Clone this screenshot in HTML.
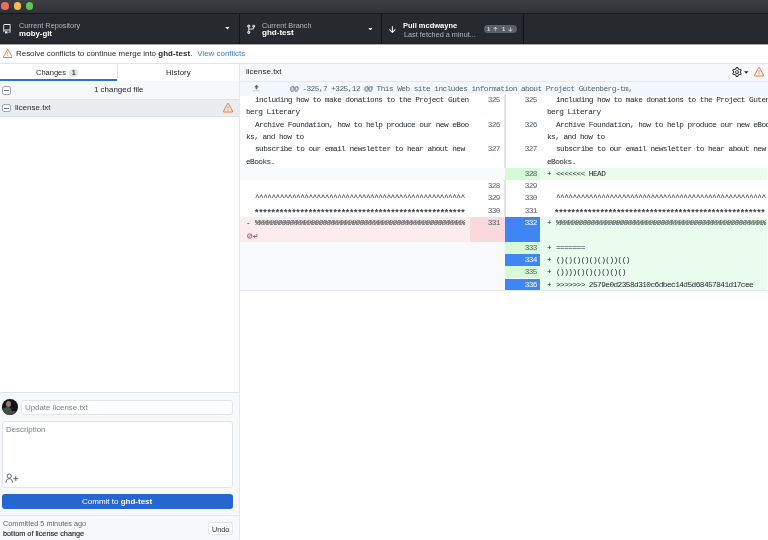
<!DOCTYPE html>
<html><head><meta charset="utf-8">
<style>
*{margin:0;padding:0;box-sizing:border-box}
html,body{width:768px;height:540px;overflow:hidden;background:#fff;font-family:"Liberation Sans",sans-serif;color:#24292e}
.a{position:absolute}
.t{position:absolute;white-space:pre;line-height:1;will-change:transform}
.m{font-family:"Liberation Mono",monospace}
</style></head><body>
<!-- title bar -->
<div class="a" style="left:0;top:0;width:768px;height:13px;background:linear-gradient(#3d3f45,#2e3035)"></div>
<div class="a" style="left:0;top:13px;width:768px;height:1px;background:#19191c"></div>
<div class="a" style="left:1.1px;top:2.2px;width:7.6px;height:7.6px;border-radius:50%;background:#ed6a5e"></div>
<div class="a" style="left:13.5px;top:2.2px;width:7.6px;height:7.6px;border-radius:50%;background:#f5bf4f"></div>
<div class="a" style="left:25.5px;top:2.2px;width:7.6px;height:7.6px;border-radius:50%;background:#61c454"></div>
<!-- toolbar -->
<div class="a" style="left:0;top:14px;width:768px;height:29.5px;background:#26292e"></div>
<div class="a" style="left:0;top:43px;width:768px;height:1px;background:#1d2024"></div><div class="a" style="left:0;top:44px;width:768px;height:1px;background:#a9abae"></div>
<div class="a" style="left:239px;top:14px;width:1px;height:29.5px;background:#121315"></div>
<div class="a" style="left:381px;top:14px;width:1px;height:29.5px;background:#121315"></div>
<div class="a" style="left:523px;top:14px;width:1px;height:29.5px;background:#121315"></div>
<!-- repo icon -->
<svg class="a" style="left:2.45px;top:23.8px" width="9.84" height="9.84" viewBox="0 0 16 16"><path fill="#e6e8ea" d="M2 2.5A2.5 2.5 0 0 1 4.5 0h8.75a.75.75 0 0 1 .75.75v12.5a.75.75 0 0 1-.75.75h-2.5a.75.75 0 0 1 0-1.5h1.75v-2h-8a1 1 0 0 0-.714 1.7.75.75 0 1 1-1.072 1.05A2.495 2.495 0 0 1 2 11.5Zm10.5-1h-8a1 1 0 0 0-1 1v6.708A2.486 2.486 0 0 1 4.5 9h8ZM5 12.25a.25.25 0 0 1 .25-.25h3.5a.25.25 0 0 1 .25.25v3.25a.25.25 0 0 1-.4.2l-1.45-1.087a.249.249 0 0 0-.3 0L5.4 15.7a.25.25 0 0 1-.4-.2Z"/></svg>
<div class="t" style="left:19px;top:21.7px;font-size:7.3px;color:#b3b7bc">Current Repository</div>
<div class="t" style="left:19px;top:29.6px;font-size:7.8px;font-weight:bold;color:#fff">moby-git</div>
<svg class="a" style="left:225.4px;top:27.4px" width="4.8" height="2.6" viewBox="0 0 5 3"><path d="M0 0h5L2.5 3z" fill="#fff"/></svg>
<!-- branch icon -->
<svg class="a" style="left:245.6px;top:23.75px" width="10.4" height="10.4" viewBox="0 0 16 16"><path fill="#e6e8ea" d="M9.5 3.25a2.25 2.25 0 1 1 3 2.122V6A2.5 2.5 0 0 1 10 8.5H6a1 1 0 0 0-1 1v1.128a2.251 2.251 0 1 1-1.5 0V5.372a2.25 2.25 0 1 1 1.5 0v1.836A2.493 2.493 0 0 1 6 7h4a1 1 0 0 0 1-1v-.628A2.25 2.25 0 0 1 9.5 3.25Zm-6 0a.75.75 0 1 0 1.5 0 .75.75 0 0 0-1.5 0Zm8.25-.75a.75.75 0 1 0 0 1.5.75.75 0 0 0 0-1.5ZM4.25 12a.75.75 0 1 0 0 1.5.75.75 0 0 0 0-1.5Z"/></svg>
<div class="t" style="left:262px;top:21.6px;font-size:7.3px;color:#b3b7bc">Current Branch</div>
<div class="t" style="left:262px;top:29.2px;font-size:8.05px;font-weight:bold;color:#fff">ghd-test</div>
<svg class="a" style="left:367.6px;top:27.9px" width="4.8" height="2.6" viewBox="0 0 5 3"><path d="M0 0h5L2.5 3z" fill="#fff"/></svg>
<!-- pull icon -->
<svg class="a" style="left:387.3px;top:24.05px" width="10.4" height="10.4" viewBox="0 0 16 16"><path fill="#ffffff" d="M13.03 8.22a.75.75 0 0 1 0 1.06l-4.25 4.25a.75.75 0 0 1-1.06 0L3.47 9.28a.751.751 0 0 1 .018-1.042.751.751 0 0 1 1.042-.018l2.97 2.97V3.75a.75.75 0 0 1 1.5 0v7.44l2.97-2.97a.75.75 0 0 1 1.06 0Z"/></svg>
<div class="t" style="left:403.4px;top:21.85px;font-size:7.5px;font-weight:bold;color:#fff">Pull mcdwayne</div>
<div class="t" style="left:403.6px;top:30.95px;font-size:7.3px;color:#b3b7bc">Last fetched a minut...</div>
<div class="a" style="left:484px;top:24.5px;width:33px;height:8.4px;border-radius:4.2px;background:#5b6067"></div>
<div class="t" style="left:487.3px;top:27px;font-size:5.8px;font-weight:bold;color:#d6d9dc">1</div>
<svg class="a" style="left:492.4px;top:25.9px" width="6.56" height="6.56" viewBox="0 0 16 16"><path fill="#d6d9dc" d="M3.47 7.78a.75.75 0 0 1 0-1.06l4.25-4.25a.75.75 0 0 1 1.06 0l4.25 4.25a.751.751 0 0 1-.018 1.042.751.751 0 0 1-1.042.018L8.75 4.81v7.44a.75.75 0 0 1-1.5 0V4.81L4.53 7.78a.75.75 0 0 1-1.06 0Z"/></svg>
<div class="t" style="left:501.5px;top:27px;font-size:5.8px;font-weight:bold;color:#d6d9dc">1</div>
<svg class="a" style="left:506.5px;top:25.6px" width="6.56" height="6.56" viewBox="0 0 16 16"><path fill="#d6d9dc" d="M13.03 8.22a.75.75 0 0 1 0 1.06l-4.25 4.25a.75.75 0 0 1-1.06 0L3.47 9.28a.751.751 0 0 1 .018-1.042.751.751 0 0 1 1.042-.018l2.97 2.97V3.75a.75.75 0 0 1 1.5 0v7.44l2.97-2.97a.75.75 0 0 1 1.06 0Z"/></svg>

<!-- banner -->
<div class="a" style="left:0;top:45px;width:768px;height:18px;background:#fff"></div>
<div class="a" style="left:0;top:63px;width:768px;height:1px;background:#e1e4e8"></div>
<svg class="a" style="left:2.6px;top:48.6px" width="9.6" height="9.6" viewBox="0 0 16 16"><path fill="#ee7a3e" d="M6.457 1.047c.659-1.234 2.427-1.234 3.086 0l6.082 11.378A1.75 1.75 0 0 1 14.082 15H1.918a1.75 1.75 0 0 1-1.543-2.575Zm1.763.707a.25.25 0 0 0-.44 0L1.698 13.132a.25.25 0 0 0 .22.368h12.164a.25.25 0 0 0 .22-.368Zm.53 3.996v2.5a.75.75 0 0 1-1.5 0v-2.5a.75.75 0 0 1 1.5 0ZM9 11a1 1 0 1 1-2 0 1 1 0 0 1 2 0Z"/></svg>
<div class="t" style="left:16.3px;top:49.7px;font-size:7.93px;color:#24292e">Resolve conflicts to continue merge into <b style="letter-spacing:0.1px">ghd-test</b>. <span style="color:#2f7bd8;margin-left:2.6px">View conflicts</span></div>

<!-- sidebar -->
<div class="a" style="left:239px;top:63px;width:1px;height:477px;background:#e6e8eb"></div>
<div class="a" style="left:117px;top:63.5px;width:1px;height:17px;background:#e1e4e8"></div>
<div class="a" style="left:0;top:80.5px;width:239px;height:1px;background:#e1e4e8"></div>
<div class="a" style="left:0;top:79px;width:117px;height:2px;background:#2f6fd6"></div>
<div class="t" style="left:35.5px;top:68.9px;font-size:7.5px;color:#24292e">Changes</div>
<div class="a" style="left:69px;top:68.6px;width:8.6px;height:8.5px;border-radius:50%;background:#e1e4e8"></div>
<div class="t" style="left:71.6px;top:70.1px;font-size:6.3px;color:#24292e;-webkit-text-stroke:0.2px #24292e">1</div>
<div class="t" style="left:165.6px;top:68.9px;font-size:7.95px;color:#24292e">History</div>

<div class="a" style="left:0;top:81px;width:239px;height:18px;background:#f6f8fa"></div>
<div class="a" style="left:0;top:98.5px;width:239px;height:1px;background:#e1e4e8"></div>
<div class="a" style="left:2.1px;top:86.2px;width:8.6px;height:8.5px;border-radius:2px;border:1px solid #a3a9b0;background:#fff"></div>
<div class="a" style="left:3.9px;top:89.9px;width:5px;height:1.1px;background:#6a737d"></div>
<div class="t" style="left:93.5px;top:86.1px;font-size:7.95px;color:#24292e">1 changed file</div>

<div class="a" style="left:0;top:99.5px;width:239px;height:17.5px;background:#eaedf0"></div><div class="a" style="left:0;top:116.3px;width:239px;height:1px;background:#e3e6e9"></div>
<div class="a" style="left:2.1px;top:104.1px;width:8.5px;height:8.4px;border-radius:2px;border:1px solid #a3a9b0;background:#fff"></div>
<div class="a" style="left:3.9px;top:107.8px;width:5px;height:1.1px;background:#6a737d"></div>
<div class="t" style="left:14.8px;top:103.8px;font-size:8px;color:#24292e">license.txt</div>
<svg class="a" style="left:222.6px;top:102.6px" width="10.1" height="10.1" viewBox="0 0 16 16"><path fill="#ee7a3e" d="M6.457 1.047c.659-1.234 2.427-1.234 3.086 0l6.082 11.378A1.75 1.75 0 0 1 14.082 15H1.918a1.75 1.75 0 0 1-1.543-2.575Zm1.763.707a.25.25 0 0 0-.44 0L1.698 13.132a.25.25 0 0 0 .22.368h12.164a.25.25 0 0 0 .22-.368Zm.53 3.996v2.5a.75.75 0 0 1-1.5 0v-2.5a.75.75 0 0 1 1.5 0ZM9 11a1 1 0 1 1-2 0 1 1 0 0 1 2 0Z"/></svg>

<!-- commit area -->
<div class="a" style="left:0;top:392.5px;width:239px;height:147.5px;background:#f6f8fa"></div>
<div class="a" style="left:0;top:392px;width:239px;height:1px;background:#e1e4e8"></div>
<div class="a" style="left:2.4px;top:399px;width:15.6px;height:15.6px;border-radius:50%;background:#15161a;overflow:hidden">
  <div class="a" style="left:0.5px;top:7.5px;width:9.5px;height:10px;border-radius:45%;background:#42504a"></div>
  <div class="a" style="left:4px;top:2.2px;width:5px;height:5.8px;border-radius:50%;background:#8e7a76"></div>
  <div class="a" style="left:9.5px;top:12px;width:4px;height:3px;border-radius:50%;background:#5a4f4c"></div>
</div>
<div class="a" style="left:21px;top:399.5px;width:211.8px;height:15px;border-radius:3px;border:1px solid #e1e4e8;background:#fff"></div>
<div class="t" style="left:24.6px;top:403.8px;font-size:7.9px;color:#7b828a">Update license.txt</div>
<div class="a" style="left:2px;top:421.3px;width:230.8px;height:66.3px;border-radius:3px;border:1px solid #e1e4e8;background:#fff"></div>
<div class="t" style="left:6.2px;top:426.1px;font-size:7.9px;color:#7b828a">Description</div>
<svg class="a" style="left:5px;top:473px" width="14" height="10" viewBox="0 0 14 10"><circle cx="4.3" cy="3.1" r="2.1" fill="none" stroke="#57606a" stroke-width="0.95"/><path d="M1 9.4 C1.2 6.9 2.6 5.7 4.3 5.7 S7.4 6.9 7.6 9.4" fill="none" stroke="#57606a" stroke-width="0.95" stroke-linecap="round"/><path d="M10.8 3.6v4.2 M8.7 5.7h4.2" stroke="#57606a" stroke-width="0.95" stroke-linecap="round"/></svg>
<div class="a" style="left:2.2px;top:493.8px;width:230.7px;height:15.2px;border-radius:3px;background:#2566d0"></div>
<div class="t" style="left:82.2px;top:498.2px;font-size:8px;color:#fff">Commit to <b>ghd-test</b></div>
<div class="a" style="left:0;top:515px;width:239px;height:1px;background:#e1e4e8"></div>
<div class="t" style="left:2.8px;top:520.3px;font-size:7.3px;color:#5f6873">Committed 5 minutes ago</div>
<div class="t" style="left:2.8px;top:529.6px;font-size:7.3px;color:#24292e;-webkit-text-stroke:0.15px #24292e">bottom of license change</div>
<div class="a" style="left:208.2px;top:522.3px;width:24.4px;height:12.6px;border-radius:3px;border:1px solid #e1e4e8;background:#fff"></div>
<div class="t" style="left:211.8px;top:525.8px;font-size:7.2px;color:#24292e">Undo</div>

<!-- diff header -->
<div class="a" style="left:240px;top:63.5px;width:528px;height:18px;background:#f6f8fa"></div>
<div class="a" style="left:240px;top:81px;width:528px;height:1px;background:#e6e8eb"></div>
<div class="t" style="left:245.6px;top:68.3px;font-size:8px;color:#24292e">license.txt</div>
<svg class="a" style="left:731.8px;top:67px" width="10" height="10" viewBox="0 0 16 16"><path fill="#24292e" d="M8 0a8.2 8.2 0 0 1 .701.031C9.444.095 9.99.645 10.16 1.29l.288 1.107c.018.066.079.158.212.224.231.114.454.243.668.386.123.082.233.09.299.071l1.103-.303c.644-.176 1.392.021 1.82.63.27.385.506.792.704 1.218.315.675.111 1.422-.364 1.891l-.814.806c-.049.048-.098.147-.088.294.016.257.016.515 0 .772-.01.147.038.246.088.294l.814.806c.475.469.679 1.216.364 1.891a7.977 7.977 0 0 1-.704 1.217c-.428.61-1.176.807-1.82.63l-1.102-.302c-.067-.019-.177-.011-.3.071a5.909 5.909 0 0 1-.668.386c-.133.066-.194.158-.211.224l-.29 1.106c-.168.646-.715 1.196-1.458 1.26a8.006 8.006 0 0 1-1.402 0c-.743-.064-1.289-.614-1.458-1.26l-.289-1.106c-.018-.066-.079-.158-.212-.224a5.738 5.738 0 0 1-.668-.386c-.123-.082-.233-.09-.299-.071l-1.103.303c-.644.176-1.392-.021-1.82-.63a8.12 8.12 0 0 1-.704-1.218c-.315-.675-.111-1.422.363-1.891l.815-.806c.05-.048.098-.147.088-.294a6.214 6.214 0 0 1 0-.772c.01-.147-.038-.246-.088-.294l-.815-.806C.635 6.045.431 5.298.746 4.623a7.92 7.92 0 0 1 .704-1.217c.428-.61 1.176-.807 1.82-.63l1.102.302c.067.019.177.011.3-.071.214-.143.437-.272.668-.386.133-.066.194-.158.211-.224l.29-1.106C6.009.645 6.556.095 7.299.03 7.53.01 7.764 0 8 0Zm-.571 1.525c-.036.003-.108.036-.137.146l-.289 1.105c-.147.561-.549.967-.998 1.189-.173.086-.34.183-.5.29-.417.278-.97.423-1.529.27l-1.103-.303c-.109-.03-.175.016-.195.045-.22.312-.412.644-.573.99-.014.031-.021.11.059.19l.815.806c.411.406.562.957.53 1.456a4.709 4.709 0 0 0 0 .582c.032.499-.119 1.05-.53 1.456l-.815.806c-.081.08-.073.159-.059.19.162.346.353.677.573.989.02.03.085.076.195.046l1.102-.303c.56-.153 1.113-.008 1.53.27.161.107.328.204.501.29.447.222.85.629.997 1.189l.289 1.105c.029.109.101.143.137.146a6.6 6.6 0 0 0 1.142 0c.036-.003.108-.036.137-.146l.289-1.105c.147-.561.549-.967.998-1.189.173-.086.34-.183.5-.29.417-.278.97-.423 1.529-.27l1.103.303c.109.029.175-.016.195-.045.22-.313.411-.644.573-.99.014-.031.021-.11-.059-.19l-.815-.806c-.411-.406-.562-.957-.53-1.456a4.709 4.709 0 0 0 0-.582c-.032-.499.119-1.05.53-1.456l.815-.806c.081-.08.073-.159.059-.19a6.464 6.464 0 0 0-.573-.989c-.02-.03-.085-.076-.195-.046l-1.102.303c-.56.153-1.113.008-1.53-.27a4.44 4.44 0 0 0-.501-.29c-.447-.222-.85-.629-.997-1.189l-.289-1.105c-.029-.11-.101-.143-.137-.146a6.6 6.6 0 0 0-1.142 0ZM11 8a3 3 0 1 1-6 0 3 3 0 0 1 6 0ZM9.5 8a1.5 1.5 0 1 0-3.001.001A1.5 1.5 0 0 0 9.5 8Z"/></svg>
<svg class="a" style="left:744.2px;top:70.7px" width="4.5" height="3" viewBox="0 0 5 3"><path d="M0 0h5L2.5 3z" fill="#24292e"/></svg>
<svg class="a" style="left:754.2px;top:66.9px" width="10.1" height="10.1" viewBox="0 0 16 16"><path fill="#ee7a3e" d="M6.457 1.047c.659-1.234 2.427-1.234 3.086 0l6.082 11.378A1.75 1.75 0 0 1 14.082 15H1.918a1.75 1.75 0 0 1-1.543-2.575Zm1.763.707a.25.25 0 0 0-.44 0L1.698 13.132a.25.25 0 0 0 .22.368h12.164a.25.25 0 0 0 .22-.368Zm.53 3.996v2.5a.75.75 0 0 1-1.5 0v-2.5a.75.75 0 0 1 1.5 0ZM9 11a1 1 0 1 1-2 0 1 1 0 0 1 2 0Z"/></svg>

<div id="diff">
<div class="a" style="left:504px;top:94.00px;width:1.5px;height:196.80px;background:#e1e4e8"></div>
<div class="a" style="left:240.00px;top:82.00px;width:528.00px;height:12.00px;background:#f1f8ff;"></div>
<div class="a" style="left:240.00px;top:94.00px;width:230.00px;height:1.70px;background:#f1f8ff;"></div>
<div class="a" style="left:540.00px;top:94.00px;width:228.00px;height:1.70px;background:#f1f8ff;"></div>
<div class="t m" style="left:289.50px;top:83.00px;height:12.3px;line-height:12.3px;font-size:7.8px;letter-spacing:-0.555px;color:#5a636e;">@@ -325,7 +325,12 @@ This Web site includes information about Project Gutenberg-tm,</div>
<div class="a" style="left:240.00px;top:167.80px;width:265.00px;height:12.30px;background:#f9fafb;"></div>
<div class="a" style="left:505.00px;top:167.80px;width:35.00px;height:12.30px;background:#d6f9d8;"></div>
<div class="a" style="left:540.00px;top:167.80px;width:227.20px;height:12.30px;background:#eafcee;"></div>
<div class="a" style="left:240.00px;top:217.00px;width:230.00px;height:24.60px;background:#fbecee;"></div>
<div class="a" style="left:470.00px;top:217.00px;width:35.00px;height:24.60px;background:#f9d9dd;"></div>
<div class="a" style="left:505.00px;top:217.00px;width:35.00px;height:24.60px;background:#3f86f2;"></div>
<div class="a" style="left:540.00px;top:217.00px;width:227.20px;height:73.80px;background:#eafcee;"></div>
<div class="a" style="left:240.00px;top:241.60px;width:265.00px;height:49.20px;background:#f9fafb;"></div>
<div class="a" style="left:505.00px;top:241.60px;width:35.00px;height:12.30px;background:#d6f9d8;"></div>
<div class="a" style="left:505.00px;top:253.90px;width:35.00px;height:12.30px;background:#3f86f2;"></div>
<div class="a" style="left:505.00px;top:266.20px;width:35.00px;height:12.30px;background:#d6f9d8;"></div>
<div class="a" style="left:505.00px;top:278.50px;width:35.00px;height:12.30px;background:#3f86f2;"></div>
<div class="t m" style="left:255.05px;top:94.00px;height:12.3px;line-height:12.3px;font-size:7.8px;letter-spacing:-0.571px;color:#24292e;">including how to make donations to the Project Guten</div>
<div class="t m" style="left:246.00px;top:106.30px;height:12.3px;line-height:12.3px;font-size:7.8px;letter-spacing:-0.555px;color:#24292e;">berg Literary</div>
<div class="t m" style="left:555.65px;top:94.00px;height:12.3px;line-height:12.3px;font-size:7.8px;letter-spacing:-0.571px;color:#24292e;">including how to make donations to the Project Guten</div>
<div class="t m" style="left:546.60px;top:106.30px;height:12.3px;line-height:12.3px;font-size:7.8px;letter-spacing:-0.555px;color:#24292e;">berg Literary</div>
<div class="t m" style="left:460.00px;width:40px;text-align:right;top:94.00px;height:12.3px;line-height:12.3px;font-size:7.8px;letter-spacing:-0.555px;color:#586069">325</div>
<div class="t m" style="left:496.60px;width:40px;text-align:right;top:94.00px;height:12.3px;line-height:12.3px;font-size:7.8px;letter-spacing:-0.555px;color:#586069">325</div>
<div class="t m" style="left:255.05px;top:118.60px;height:12.3px;line-height:12.3px;font-size:7.8px;letter-spacing:-0.571px;color:#24292e;">Archive Foundation, how to help produce our new eBoo</div>
<div class="t m" style="left:246.00px;top:130.90px;height:12.3px;line-height:12.3px;font-size:7.8px;letter-spacing:-0.555px;color:#24292e;">ks, and how to</div>
<div class="t m" style="left:555.65px;top:118.60px;height:12.3px;line-height:12.3px;font-size:7.8px;letter-spacing:-0.571px;color:#24292e;">Archive Foundation, how to help produce our new eBoo</div>
<div class="t m" style="left:546.60px;top:130.90px;height:12.3px;line-height:12.3px;font-size:7.8px;letter-spacing:-0.555px;color:#24292e;">ks, and how to</div>
<div class="t m" style="left:460.00px;width:40px;text-align:right;top:118.60px;height:12.3px;line-height:12.3px;font-size:7.8px;letter-spacing:-0.555px;color:#586069">326</div>
<div class="t m" style="left:496.60px;width:40px;text-align:right;top:118.60px;height:12.3px;line-height:12.3px;font-size:7.8px;letter-spacing:-0.555px;color:#586069">326</div>
<div class="t m" style="left:255.05px;top:143.20px;height:12.3px;line-height:12.3px;font-size:7.8px;letter-spacing:-0.571px;color:#24292e;">subscribe to our email newsletter to hear about new</div>
<div class="t m" style="left:246.00px;top:155.50px;height:12.3px;line-height:12.3px;font-size:7.8px;letter-spacing:-0.555px;color:#24292e;">eBooks.</div>
<div class="t m" style="left:555.65px;top:143.20px;height:12.3px;line-height:12.3px;font-size:7.8px;letter-spacing:-0.571px;color:#24292e;">subscribe to our email newsletter to hear about new</div>
<div class="t m" style="left:546.60px;top:155.50px;height:12.3px;line-height:12.3px;font-size:7.8px;letter-spacing:-0.555px;color:#24292e;">eBooks.</div>
<div class="t m" style="left:460.00px;width:40px;text-align:right;top:143.20px;height:12.3px;line-height:12.3px;font-size:7.8px;letter-spacing:-0.555px;color:#586069">327</div>
<div class="t m" style="left:496.60px;width:40px;text-align:right;top:143.20px;height:12.3px;line-height:12.3px;font-size:7.8px;letter-spacing:-0.555px;color:#586069">327</div>
<div class="t m" style="left:546.60px;top:167.80px;height:12.3px;line-height:12.3px;font-size:7.8px;letter-spacing:-0.555px;color:#24292e;">+ </div>
<div class="t m" style="left:555.65px;top:167.80px;height:12.3px;line-height:12.3px;font-size:7.8px;letter-spacing:-0.571px;color:#24292e;">&lt;&lt;&lt;&lt;&lt;&lt;&lt; HEAD</div>
<div class="t m" style="left:496.60px;width:40px;text-align:right;top:167.80px;height:12.3px;line-height:12.3px;font-size:7.8px;letter-spacing:-0.555px;color:#586069">328</div>
<div class="t m" style="left:246.00px;top:180.10px;height:12.3px;line-height:12.3px;font-size:7.8px;letter-spacing:-0.555px;color:#24292e;"></div>
<div class="t m" style="left:546.60px;top:180.10px;height:12.3px;line-height:12.3px;font-size:7.8px;letter-spacing:-0.555px;color:#24292e;"></div>
<div class="t m" style="left:460.00px;width:40px;text-align:right;top:180.10px;height:12.3px;line-height:12.3px;font-size:7.8px;letter-spacing:-0.555px;color:#586069">328</div>
<div class="t m" style="left:496.60px;width:40px;text-align:right;top:180.10px;height:12.3px;line-height:12.3px;font-size:7.8px;letter-spacing:-0.555px;color:#586069">329</div>
<div class="t m" style="left:255.05px;top:192.40px;height:12.3px;line-height:12.3px;font-size:7.8px;letter-spacing:-0.571px;color:#24292e;">^^^^^^^^^^^^^^^^^^^^^^^^^^^^^^^^^^^^^^^^^^^^^^^^^^^</div>
<div class="t m" style="left:555.65px;top:192.40px;height:12.3px;line-height:12.3px;font-size:7.8px;letter-spacing:-0.571px;color:#24292e;">^^^^^^^^^^^^^^^^^^^^^^^^^^^^^^^^^^^^^^^^^^^^^^^^^^^</div>
<div class="t m" style="left:460.00px;width:40px;text-align:right;top:192.40px;height:12.3px;line-height:12.3px;font-size:7.8px;letter-spacing:-0.555px;color:#586069">329</div>
<div class="t m" style="left:496.60px;width:40px;text-align:right;top:192.40px;height:12.3px;line-height:12.3px;font-size:7.8px;letter-spacing:-0.555px;color:#586069">330</div>
<div class="t m" style="left:246.00px;top:204.70px;height:12.3px;line-height:12.3px;font-size:7.8px;letter-spacing:-0.555px;color:#24292e;">  </div>
<div class="t m" style="left:253.61px;top:207.60px;height:12.3px;line-height:12.3px;font-size:9px;font-weight:bold;letter-spacing:-1.275px;color:#3a4047;">***************************************************</div>
<div class="t m" style="left:546.60px;top:204.70px;height:12.3px;line-height:12.3px;font-size:7.8px;letter-spacing:-0.555px;color:#24292e;">  </div>
<div class="t m" style="left:554.21px;top:207.60px;height:12.3px;line-height:12.3px;font-size:9px;font-weight:bold;letter-spacing:-1.275px;color:#3a4047;">***************************************************</div>
<div class="t m" style="left:460.00px;width:40px;text-align:right;top:204.70px;height:12.3px;line-height:12.3px;font-size:7.8px;letter-spacing:-0.555px;color:#586069">330</div>
<div class="t m" style="left:496.60px;width:40px;text-align:right;top:204.70px;height:12.3px;line-height:12.3px;font-size:7.8px;letter-spacing:-0.555px;color:#586069">331</div>
<div class="t m" style="left:246.00px;top:217.00px;height:12.3px;line-height:12.3px;font-size:7.8px;letter-spacing:-0.555px;color:#24292e;">- </div>
<div class="t m" style="left:255.05px;top:217.00px;height:12.3px;line-height:12.3px;font-size:7.8px;letter-spacing:-0.571px;color:#24292e;">%%%%%%%%%%%%%%%%%%%%%%%%%%%%%%%%%%%%%%%%%%%%%%%%%%%</div>
<div class="t m" style="left:246.00px;top:229.30px;height:12.3px;line-height:12.3px;font-size:7.8px;letter-spacing:-0.555px;color:#24292e;"></div>
<div class="t m" style="left:546.60px;top:217.00px;height:12.3px;line-height:12.3px;font-size:7.8px;letter-spacing:-0.555px;color:#24292e;">+ </div>
<div class="t m" style="left:555.65px;top:217.00px;height:12.3px;line-height:12.3px;font-size:7.8px;letter-spacing:-0.571px;color:#24292e;">%%%%%%%%%%%%%%%%%%%%%%%%%%%%%%%%%%%%%%%%%%%%%%%%%%%</div>
<div class="t m" style="left:460.00px;width:40px;text-align:right;top:217.00px;height:12.3px;line-height:12.3px;font-size:7.8px;letter-spacing:-0.555px;color:#586069">331</div>
<div class="t m" style="left:496.60px;width:40px;text-align:right;top:217.00px;height:12.3px;line-height:12.3px;font-size:7.8px;letter-spacing:-0.555px;color:#fff">332</div>
<div class="t m" style="left:546.60px;top:241.60px;height:12.3px;line-height:12.3px;font-size:7.8px;letter-spacing:-0.555px;color:#24292e;">+ </div>
<div class="t m" style="left:555.65px;top:241.60px;height:12.3px;line-height:12.3px;font-size:7.8px;letter-spacing:-0.571px;color:#24292e;">=======</div>
<div class="t m" style="left:496.60px;width:40px;text-align:right;top:241.60px;height:12.3px;line-height:12.3px;font-size:7.8px;letter-spacing:-0.555px;color:#586069">333</div>
<div class="t m" style="left:546.60px;top:253.90px;height:12.3px;line-height:12.3px;font-size:7.8px;letter-spacing:-0.555px;color:#24292e;">+ </div>
<div class="t m" style="left:555.65px;top:253.90px;height:12.3px;line-height:12.3px;font-size:7.8px;letter-spacing:-0.571px;color:#24292e;">()()()()()()())(()</div>
<div class="t m" style="left:496.60px;width:40px;text-align:right;top:253.90px;height:12.3px;line-height:12.3px;font-size:7.8px;letter-spacing:-0.555px;color:#fff">334</div>
<div class="t m" style="left:546.60px;top:266.20px;height:12.3px;line-height:12.3px;font-size:7.8px;letter-spacing:-0.555px;color:#24292e;">+ </div>
<div class="t m" style="left:555.65px;top:266.20px;height:12.3px;line-height:12.3px;font-size:7.8px;letter-spacing:-0.571px;color:#24292e;">())))()()()()()()</div>
<div class="t m" style="left:496.60px;width:40px;text-align:right;top:266.20px;height:12.3px;line-height:12.3px;font-size:7.8px;letter-spacing:-0.555px;color:#586069">335</div>
<div class="t m" style="left:546.60px;top:278.50px;height:12.3px;line-height:12.3px;font-size:7.8px;letter-spacing:-0.555px;color:#24292e;">+ </div>
<div class="t m" style="left:555.65px;top:278.50px;height:12.3px;line-height:12.3px;font-size:7.8px;letter-spacing:-0.571px;color:#24292e;">&gt;&gt;&gt;&gt;&gt;&gt;&gt; 2579e0d2358d310c6dbec14d5d68457841d17cee</div>
<div class="t m" style="left:496.60px;width:40px;text-align:right;top:278.50px;height:12.3px;line-height:12.3px;font-size:7.8px;letter-spacing:-0.555px;color:#fff">336</div>
<div class="a" style="left:240.00px;top:290.30px;width:528.00px;height:1.00px;background:#e6e8eb;"></div>
<svg class="a" style="left:247px;top:232.6px" width="11" height="6" viewBox="0 0 11 6"><circle cx="2.7" cy="3" r="2.2" fill="none" stroke="#cb2431" stroke-width="0.75"/><path d="M1.2 4.5 L4.2 1.5" stroke="#cb2431" stroke-width="0.75"/><path d="M10 1.2 v2.3 h-3.5 M7.8 2.2 l-1.3 1.3 1.3 1.3" fill="none" stroke="#cb2431" stroke-width="0.75"/></svg>
<svg class="a" style="left:252.2px;top:84px" width="9" height="8" viewBox="0 0 9 8"><path d="M4.5 0.8 L7 3.3 H5.3 V5.2 H3.7 V3.3 H2 Z" fill="#586069"/><path d="M0.8 6.8 H8.2" stroke="#959da5" stroke-width="0.8" stroke-dasharray="0.8 0.7"/></svg>
</div><!--/diff-->
</body></html>
